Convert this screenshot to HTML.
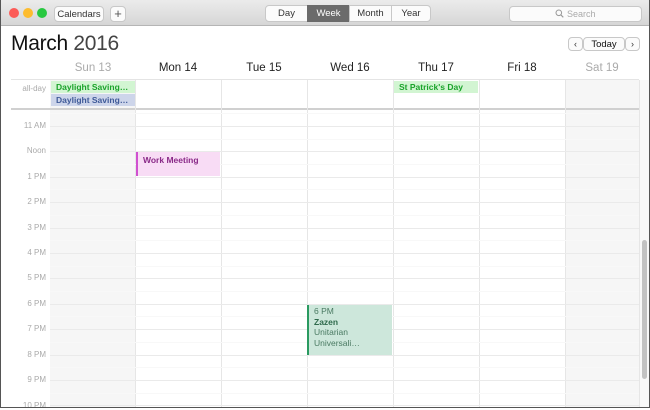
<!DOCTYPE html><html><head><style>
*{margin:0;padding:0;box-sizing:border-box}
body{width:650px;height:408px;overflow:hidden;font-family:"Liberation Sans",sans-serif;background:#fff;position:relative}
.a{position:absolute}
.win{left:0;top:0;width:650px;height:408px;border:1px solid #555;border-top:none}
.tb{left:0;top:0;width:650px;height:26px;background:linear-gradient(#ebebeb,#d6d6d6);border-bottom:1px solid #b5b5b5;border-left:1px solid #555;border-right:1px solid #555}
.dot{top:8px;width:10px;height:10px;border-radius:50%}
.btn{background:#fbfbfb;border:1px solid #c8c8c8;border-radius:4px;font-size:9.5px;color:#333;text-align:center;line-height:15px}
.seg{top:5px;height:17px;font-size:9.5px;line-height:16px;text-align:center;color:#333;background:#fbfbfb;border:1px solid #c8c8c8}
.day{top:62px;font-size:11.5px;color:#222;text-align:center;width:86px}
.vl{width:1px;background:#e6e6e6}
.hl{left:50px;width:589px;height:1px;background:#eaeaea}
.hh{left:50px;width:589px;height:1px;background:#f8f8f8}
.tl{left:0;width:46px;text-align:right;font-size:8px;color:#aaa}
.ev{font-size:8.5px;font-weight:bold;padding-left:5px;line-height:12px;white-space:nowrap;overflow:hidden}
</style></head><body>
<div class="a" style="left:50px;top:80px;width:85px;height:328px;background:#f6f6f6"></div>
<div class="a" style="left:565px;top:80px;width:74px;height:328px;background:#f6f6f6"></div>

<div class="a tb"></div>
<div class="a dot" style="left:9px;background:#fc5b57"></div>
<div class="a dot" style="left:23px;background:#fdbc2e"></div>
<div class="a dot" style="left:37px;background:#28c840"></div>
<div class="a btn" style="left:54px;top:6px;width:50px;height:16px">Calendars</div>
<div class="a btn" style="left:110px;top:6px;width:16px;height:16px;font-size:13px;line-height:14px;color:#555">+</div>
<div class="a seg" style="left:265px;width:43px;border-radius:4px 0 0 4px">Day</div>
<div class="a seg" style="left:307px;width:43px;background:#6b6b6b;color:#fff;border-color:#6b6b6b">Week</div>
<div class="a seg" style="left:349px;width:43px">Month</div>
<div class="a seg" style="left:391px;width:40px;border-radius:0 4px 4px 0">Year</div>
<div class="a btn" style="left:509px;top:6px;width:133px;height:16px;color:#aaa;font-size:9px"><svg width="9" height="9" viewBox="0 0 9 9" style="vertical-align:-1px"><circle cx="3.8" cy="3.8" r="2.8" fill="none" stroke="#999" stroke-width="1"/><path d="M5.8 5.8L8.3 8.3" stroke="#999" stroke-width="1.1"/></svg> Search</div>

<div class="a" style="left:11px;top:32px;font-size:21px;color:#111;letter-spacing:-0.3px">March <span style="color:#444">2016</span></div>
<div class="a btn" style="left:568px;top:37px;width:15px;height:14px;line-height:13px;font-size:9px">&lsaquo;</div>
<div class="a btn" style="left:583px;top:37px;width:42px;height:14px;line-height:13px;font-size:9.5px;color:#111">Today</div>
<div class="a btn" style="left:625px;top:37px;width:15px;height:14px;line-height:13px;font-size:9px">&rsaquo;</div>

<div class="a day" style="left:50px;color:#aaa">Sun 13</div>
<div class="a day" style="left:135px">Mon 14</div>
<div class="a day" style="left:221px">Tue 15</div>
<div class="a day" style="left:307px">Wed 16</div>
<div class="a day" style="left:393px">Thu 17</div>
<div class="a day" style="left:479px">Fri 18</div>
<div class="a day" style="left:565px;width:74px;color:#aaa">Sat 19</div>

<div class="a" style="left:11px;top:79px;width:628px;height:1px;background:#e4e4e4"></div>
<div class="a" style="left:11px;top:108px;width:628px;height:2px;background:#d0d0d0"></div>
<div class="a tl" style="top:84px">all-day</div>

<div class="a vl" style="left:135px;top:80px;height:328px"></div>
<div class="a vl" style="left:221px;top:80px;height:328px"></div>
<div class="a vl" style="left:307px;top:80px;height:328px"></div>
<div class="a vl" style="left:393px;top:80px;height:328px"></div>
<div class="a vl" style="left:479px;top:80px;height:328px"></div>
<div class="a vl" style="left:565px;top:80px;height:328px"></div>

<div class="a hh" style="top:113px"></div>
<div class="a hl" style="top:126px"></div><div class="a hh" style="top:139px"></div>
<div class="a hl" style="top:151px"></div><div class="a hh" style="top:164px"></div>
<div class="a hl" style="top:177px"></div><div class="a hh" style="top:189px"></div>
<div class="a hl" style="top:202px"></div><div class="a hh" style="top:215px"></div>
<div class="a hl" style="top:228px"></div><div class="a hh" style="top:240px"></div>
<div class="a hl" style="top:253px"></div><div class="a hh" style="top:266px"></div>
<div class="a hl" style="top:278px"></div><div class="a hh" style="top:291px"></div>
<div class="a hl" style="top:304px"></div><div class="a hh" style="top:316px"></div>
<div class="a hl" style="top:329px"></div><div class="a hh" style="top:342px"></div>
<div class="a hl" style="top:355px"></div><div class="a hh" style="top:367px"></div>
<div class="a hl" style="top:380px"></div><div class="a hh" style="top:393px"></div>
<div class="a hl" style="top:405px"></div>

<div class="a tl" style="top:121px">11 AM</div>
<div class="a tl" style="top:146px">Noon</div>
<div class="a tl" style="top:172px">1 PM</div>
<div class="a tl" style="top:197px">2 PM</div>
<div class="a tl" style="top:223px">3 PM</div>
<div class="a tl" style="top:248px">4 PM</div>
<div class="a tl" style="top:273px">5 PM</div>
<div class="a tl" style="top:299px">6 PM</div>
<div class="a tl" style="top:324px">7 PM</div>
<div class="a tl" style="top:350px">8 PM</div>
<div class="a tl" style="top:375px">9 PM</div>
<div class="a tl" style="top:401px">10 PM</div>

<div class="a ev" style="left:51px;top:81px;width:84px;height:12px;background:#d2f5d2;color:#1aa32a">Daylight Saving…</div>
<div class="a ev" style="left:51px;top:94px;width:84px;height:12px;background:#cdd5ea;color:#3f5a98">Daylight Saving…</div>
<div class="a ev" style="left:394px;top:81px;width:84px;height:12px;background:#d2f5d2;color:#1aa32a">St Patrick's Day</div>

<div class="a ev" style="left:136px;top:152px;width:84px;height:24px;background:#f8dcf5;border-left:2px solid #d050d0;color:#8a2a88;padding-top:2px">Work Meeting</div>
<div class="a" style="left:307px;top:305px;width:85px;height:50px;background:#cde7db;border-left:2px solid #2a9a60;font-size:8.5px;color:#4a7a62;padding:1px 0 0 5px;line-height:10.5px">6 PM<br><b style="color:#2f6a4c">Zazen</b><br>Unitarian<br>Universali…</div>

<div class="a" style="left:639px;top:80px;width:10px;height:327px;background:#f8f8f8;border-left:1px solid #e6e6e6"></div>
<div class="a" style="left:642px;top:240px;width:5px;height:139px;border-radius:3px;background:#c2c2c2"></div>
<div class="a win"></div>
</body></html>
